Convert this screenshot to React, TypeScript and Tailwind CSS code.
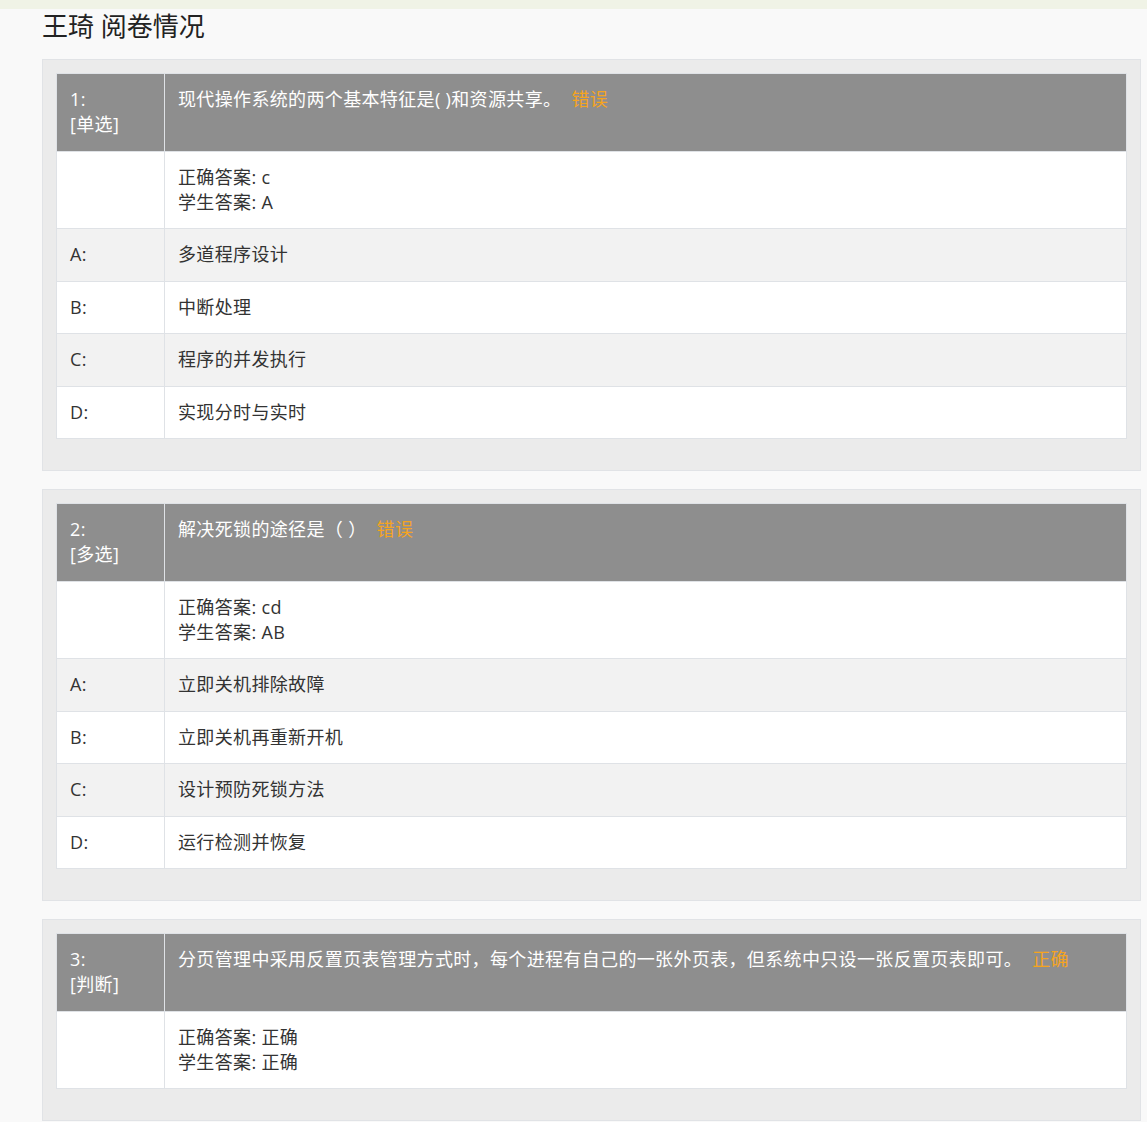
import React from 'react';

type Question = {
  no: number;
  kind: string;
  title: string;
  verdict: string;
  correct: string;
  student: string;
  options: { key: string; text: string }[];
};

const questions: Question[] = [
  {
    no: 1,
    kind: '单选',
    title: '现代操作系统的两个基本特征是( )和资源共享。',
    verdict: '错误',
    correct: 'c',
    student: 'A',
    options: [
      { key: 'A', text: '多道程序设计' },
      { key: 'B', text: '中断处理' },
      { key: 'C', text: '程序的并发执行' },
      { key: 'D', text: '实现分时与实时' },
    ],
  },
  {
    no: 2,
    kind: '多选',
    title: '解决死锁的途径是（ ）',
    verdict: '错误',
    correct: 'cd',
    student: 'AB',
    options: [
      { key: 'A', text: '立即关机排除故障' },
      { key: 'B', text: '立即关机再重新开机' },
      { key: 'C', text: '设计预防死锁方法' },
      { key: 'D', text: '运行检测并恢复' },
    ],
  },
  {
    no: 3,
    kind: '判断',
    title: '分页管理中采用反置页表管理方式时，每个进程有自己的一张外页表，但系统中只设一张反置页表即可。',
    verdict: '正确',
    correct: '正确',
    student: '正确',
    options: [],
  },
];

const cell = 'pl-[13px] pr-[14px] align-top leading-[25px] border-t border-[#dfe2e6]';

const QuestionCard: React.FC<{ q: Question }> = ({ q }) => (
  <div className="bg-[#ebebeb] border border-[#e1e3e6] pt-[13px] px-[13px] pb-[31px]">
    <table className="w-full border-collapse border border-[#dfe2e6] text-[18px] tracking-[0.35px] text-[#333]">
      <tbody>
        <tr className="bg-[#8e8e8e] text-white">
          <td className={`${cell} w-[108px] pt-[13px] pb-[14px] border-r border-r-[#dfe2e6]`}>
            {q.no}:<br />[{q.kind}]
          </td>
          <td className={`${cell} pt-[13px] pb-[14px]`}>
            {q.title} <span className="text-[#f5a41f] ml-[5px]">{q.verdict}</span>
          </td>
        </tr>
        <tr className="bg-white">
          <td className={`${cell} pt-[13px] pb-[13px] border-r border-r-[#dfe2e6]`}></td>
          <td className={`${cell} pt-[13px] pb-[13px]`}>
            正确答案: {q.correct}
            <br />
            学生答案: {q.student}
          </td>
        </tr>
        {q.options.map((o, i) => (
          <tr key={o.key} className={i % 2 === 0 ? 'bg-[#f2f2f2]' : 'bg-white'}>
            <td className={`${cell} pt-[13px] pb-[13.5px] border-r border-r-[#dfe2e6]`}>{o.key}:</td>
            <td className={`${cell} pt-[13px] pb-[13.5px]`}>{o.text}</td>
          </tr>
        ))}
      </tbody>
    </table>
  </div>
);

export default function App() {
  return (
    <div
      className="min-h-[1122px] bg-[#f9f9f9]"
      style={{ fontFamily: '"Open Sans", "Noto Sans CJK SC", sans-serif' }}
    >
      <div className="h-[9px] bg-[#f0f3e6]"></div>
      <div className="ml-[42px] mr-[6px]">
        <h1 className="text-[26px] leading-[34px] text-[#222] pb-[16px]">王琦 阅卷情况</h1>
        <div className="flex flex-col gap-[18px]">
          {questions.map((q) => (
            <QuestionCard key={q.no} q={q} />
          ))}
        </div>
      </div>
    </div>
  );
}
